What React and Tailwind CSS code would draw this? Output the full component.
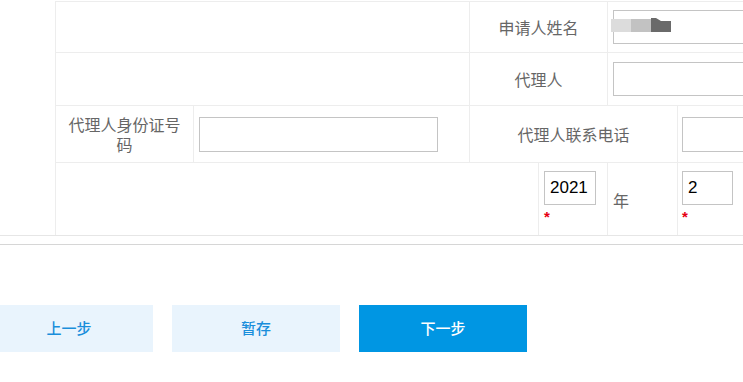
import React from 'react';

const cjk = { fontFamily: '"Noto Sans CJK SC", "Noto Sans", sans-serif' };
const latin = { fontFamily: '"Liberation Sans", Arial, sans-serif' };

function Cell({ className = '', children }) {
  return <div className={`border-r border-[#ededed] ${className}`}>{children}</div>;
}

function Label({ className = '', children }) {
  return (
    <Cell className={`flex items-center justify-center text-center px-2 text-[16px] leading-5 text-[#666] border-b ${className}`}>
      {children}
    </Cell>
  );
}

function Field({ w = 'w-[300px]', h = 'h-[34px]', value = '' }) {
  return (
    <input
      readOnly
      value={value}
      style={latin}
      className={`${w} ${h} border border-[#c4c4c4] bg-white px-[5px] text-[17px] text-black outline-none`}
    />
  );
}

function Star() {
  return (
    <div className="mt-[7px] text-[15px] leading-[10px] font-bold text-[#e60012]" style={latin}>
      *
    </div>
  );
}

export default function App() {
  return (
    <div className="w-[743px] h-[382px] overflow-hidden bg-white" style={cjk}>
      <div className="pt-px border-b border-[#e6e6e6]">
        <div className="ml-[55px] border-l border-t border-[#ededed] grid grid-cols-[138px_276px_69px_69px_70px_320px] grid-rows-[51px_53px_57px_72px]">
          {/* row 1 */}
          <Cell className="col-span-2 border-b" />
          <Label className="col-span-2">申请人姓名</Label>
          <Cell className="col-span-2 border-b flex items-center pl-[5px] relative">
            <Field />
            <svg className="absolute left-[3px] top-[16px]" width="61" height="15" viewBox="0 0 61 15">
              <rect x="0" y="1" width="20" height="13" fill="#dcdcdc" />
              <rect x="20" y="1" width="20" height="13" fill="#c2c2c2" />
              <polygon points="40,0 45,0 50,3 60,3 60,14 40,14" fill="#6a6a6a" />
            </svg>
          </Cell>

          {/* row 2 */}
          <Cell className="col-span-2 border-b" />
          <Label className="col-span-2">代理人</Label>
          <Cell className="col-span-2 border-b flex items-center pl-[5px]">
            <Field />
          </Cell>

          {/* row 3 */}
          <Label>代理人身份证号码</Label>
          <Cell className="border-b flex items-center pl-[5px]">
            <Field w="w-[239px]" h="h-[35px]" />
          </Cell>
          <Label className="col-span-3">代理人联系电话</Label>
          <Cell className="border-b flex items-center pl-[4px]">
            <Field h="h-[35px]" />
          </Cell>

          {/* row 4 */}
          <Cell className="col-span-3" />
          <Cell className="pl-[5px] pt-2">
            <Field w="w-[52px]" value="2021" />
            <Star />
          </Cell>
          <Cell className="flex items-center pl-[5px] text-[16px] text-[#666] pt-[2px]">年</Cell>
          <Cell className="pl-[4px] pt-2">
            <Field w="w-[51px]" value="2" />
            <Star />
          </Cell>
        </div>
      </div>
      <div className="h-[9px] border-b border-[#d6d6d6]" />

      <div className="flex gap-[19px] ml-[-15px] mt-[60px]">
        <button className="w-[168px] h-[47px] bg-[#e9f4fd] text-[#1a8edb] text-[15px] font-medium">上一步</button>
        <button className="w-[168px] h-[47px] bg-[#e9f4fd] text-[#1a8edb] text-[15px] font-medium">暂存</button>
        <button className="w-[168px] h-[47px] bg-[#0096e3] text-white text-[15px] font-medium">下一步</button>
      </div>
    </div>
  );
}
